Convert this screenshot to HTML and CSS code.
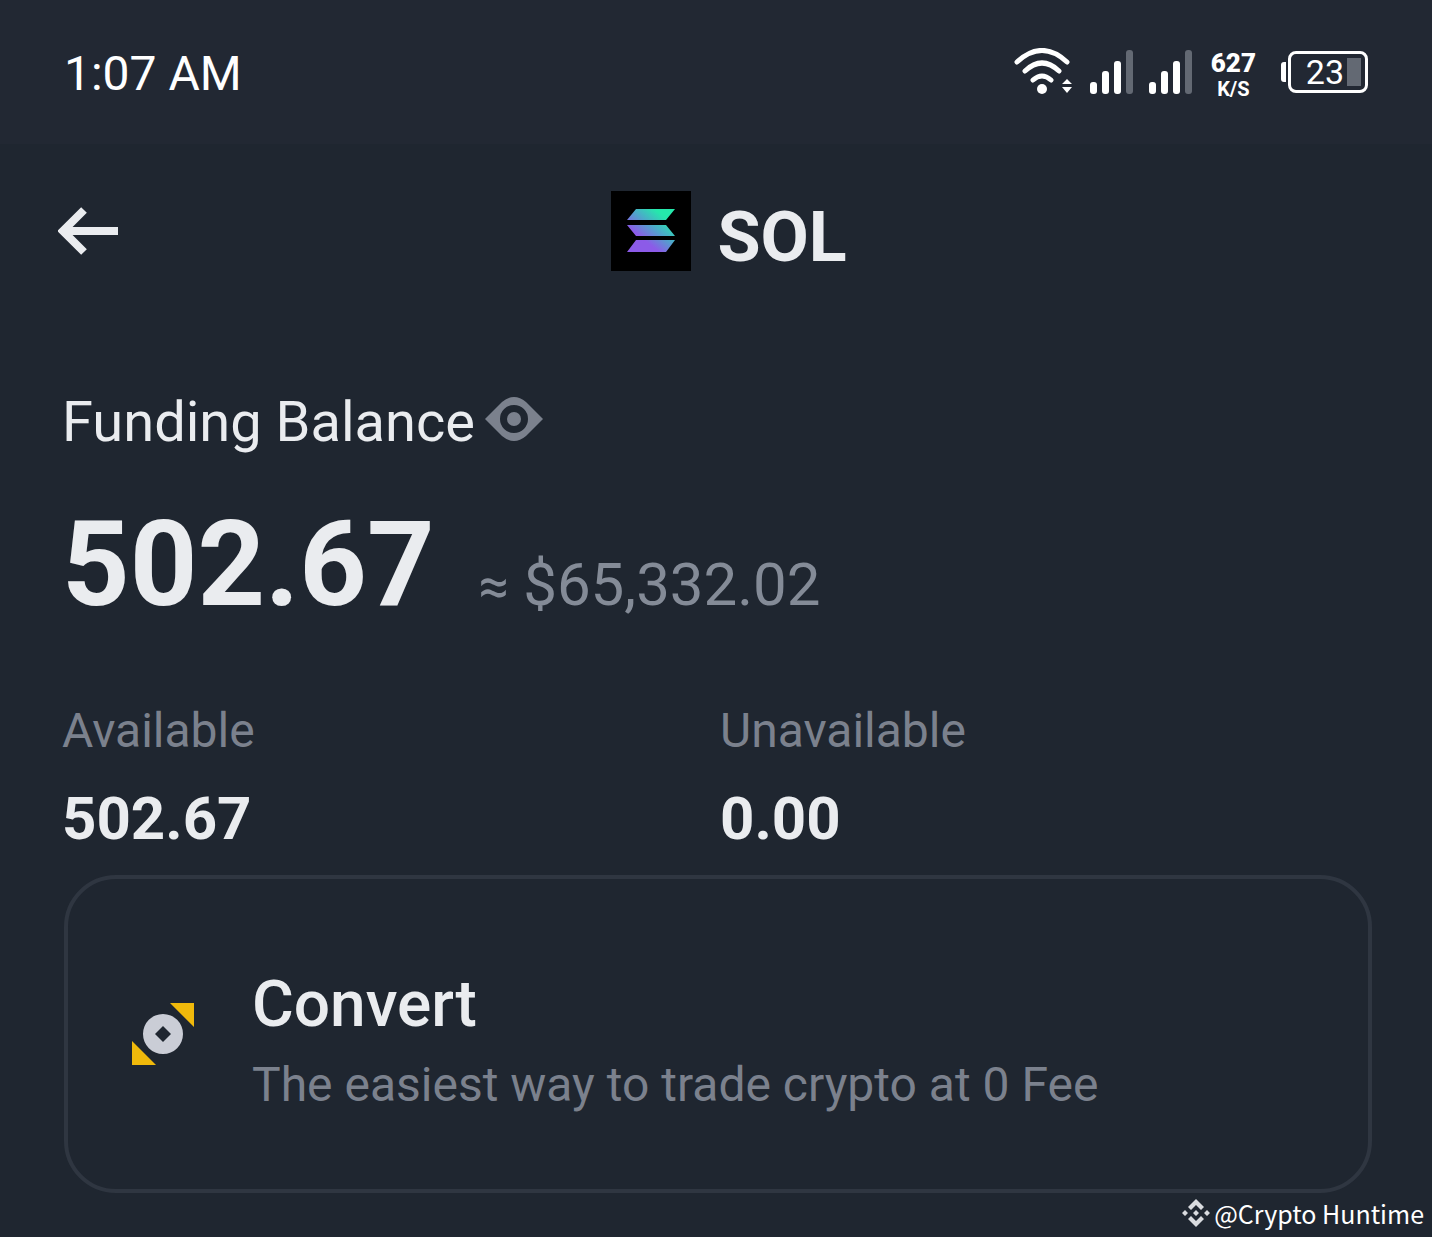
FILE: index.html
```html
<!DOCTYPE html>
<html lang="en">

<head>
    <meta charset="utf-8">
    <meta name="viewport" content="width=device-width, initial-scale=1">
    <title>SOL</title>
    <link rel="stylesheet" href="styles.css">
</head>

<body>
    <div class="status">
        <span class="time">1:07 AM</span>
        <div class="status-icons">
            <svg class="wifi" width="58" height="48" viewBox="0 0 58 48" fill="none" stroke="#fff" stroke-width="5" stroke-linecap="round">
                <path d="M3 14Q28 -9 53 14M11 23Q28 7 45 23M19 32Q28 24 37 32"/>
                <circle cx="28" cy="41" r="5" fill="#fff" stroke="none"/>
                <path d="M48 36l5-5 5 5zM48 39l5 6 5-6z" fill="#fff" stroke="none"/>
            </svg>
            <svg width="43" height="44" viewBox="0 0 43 44" fill="#fff">
                <rect x="0" y="32" width="7" height="12" rx="3"/>
                <rect x="12" y="21" width="7" height="23" rx="3"/>
                <rect x="24" y="11" width="7" height="33" rx="3"/>
                <rect x="36" y="0" width="7" height="44" rx="3" fill="#636973"/>
            </svg>
            <svg width="43" height="44" viewBox="0 0 43 44" fill="#fff">
                <rect x="0" y="32" width="7" height="12" rx="3"/>
                <rect x="12" y="21" width="7" height="23" rx="3"/>
                <rect x="24" y="11" width="7" height="33" rx="3"/>
                <rect x="36" y="0" width="7" height="44" rx="3" fill="#636973"/>
            </svg>
            <div class="speed"><b>627</b><span>K/S</span></div>
            <div class="battery"><span>23</span></div>
        </div>
    </div>

    <header class="header">
        <button class="back" aria-label="Back">
            <svg width="60" height="48" viewBox="0 0 60 48" fill="none" stroke="#eaecef" stroke-width="8">
                <path d="M26 3L5 24L26 45M8 24H60"/>
            </svg>
        </button>
        <div class="coin">
            <svg width="80" height="80" viewBox="0 0 80 80">
                <defs>
                    <linearGradient id="sol" gradientUnits="userSpaceOnUse" x1="24" y1="58" x2="56" y2="18">
                        <stop offset="0.25" stop-color="#8c5be8"/>
                        <stop offset="0.55" stop-color="#4fa5cb"/>
                        <stop offset="0.85" stop-color="#25e8ac"/>
                    </linearGradient>
                </defs>
                <rect width="80" height="80" fill="#000"/>
                <path fill="url(#sol)" d="M25 18H64L55 29H16zM16 34H55L64 45H25zM25 49H64L55 61H16z"/>
            </svg>
            <h1>SOL</h1>
        </div>
    </header>

    <main>
        <div class="label">
            <span>Funding Balance</span>
            <button class="eye" aria-label="Hide balance">
                <svg width="58" height="44" viewBox="0 0 58 44">
                    <path fill="#7b818d" fill-rule="evenodd" d="M0 22L17 5Q29 -5 41 5L58 22L41 39Q29 49 17 39zM29 8A14 14 0 1 0 29 36A14 14 0 1 0 29 8z"/>
                    <circle cx="29" cy="22" r="7" fill="#7b818d"/>
                </svg>
            </button>
        </div>
        <div class="balance">
            <span class="total">502.67</span>
            <span class="approx">≈</span>
            <span class="fiat">$65,332.02</span>
        </div>
        <dl class="split">
            <div>
                <dt>Available</dt>
                <dd>502.67</dd>
            </div>
            <div>
                <dt>Unavailable</dt>
                <dd>0.00</dd>
            </div>
        </dl>
        <a class="card" href="#">
            <svg width="62" height="62" viewBox="0 0 62 62">
                <path fill="#f0b90b" d="M38 0H62V24zM0 38V62H24z"/>
                <path fill="#cacdd6" fill-rule="evenodd" d="M31 11A20 20 0 1 0 31 51A20 20 0 1 0 31 11zM31 23L39 31L31 39L23 31z"/>
            </svg>
            <div class="card-text">
                <h2>Convert</h2>
                <p>The easiest way to trade crypto at 0 Fee</p>
            </div>
        </a>
    </main>

    <div class="watermark">
        <svg width="28" height="28" viewBox="0 0 28 28" fill="#d9dbdf">
            <path d="M14 0L22 8L19 11L14 6L9 11L6 8zM14 28L22 20L19 17L14 22L9 17L6 20zM3 11L6 14L3 17L0 14zM25 11L28 14L25 17L22 14zM14 11L17 14L14 17L11 14z"/>
        </svg>
        <span>@Crypto Huntime</span>
    </div>
</body>

</html>
```

FILE: styles.css
```css
* {
    box-sizing: border-box;
}
body {
    position: relative;
    margin: 0;
    min-height: 100vh;
    background: #1f2630;
    color: #eaecef;
    font-family: Roboto, "Noto Sans", sans-serif;
}
h1, h2, p, dl, dd {
    margin: 0;
}
button {
    padding: 0;
    border: 0;
    background: none;
    cursor: pointer;
}
svg {
    display: block;
    flex: none;
}
.status {
    display: flex;
    justify-content: space-between;
    align-items: center;
    height: 144px;
    padding: 0 64px;
    background: #222833;
    color: #fff;
}
.time {
    padding-top: 2px;
    font-size: 48px;
}
.status-icons {
    display: flex;
    align-items: center;
    gap: 16px;
}
.wifi {
    margin-right: 2px;
}
.speed {
    display: flex;
    flex-direction: column;
    align-items: center;
    margin-left: 3px;
    padding-top: 6px;
    font-size: 20px;
    line-height: 24px;
    font-weight: bold;
}
.speed b {
    font-size: 26px;
    line-height: 28px;
}
.battery {
    position: relative;
    display: flex;
    align-items: center;
    justify-content: flex-end;
    width: 80px;
    height: 42px;
    margin-left: 16px;
    padding-right: 4px;
    border: 3px solid #fff;
    border-radius: 8px;
    font-size: 34px;
}
.battery::before {
    content: "";
    position: absolute;
    left: -10px;
    width: 5px;
    height: 20px;
    border-radius: 3px 0 0 3px;
    background: #fff;
}
.battery::after {
    content: "";
    width: 14px;
    height: 28px;
    margin-left: 3px;
    background: #636973;
}
.header {
    display: grid;
    grid-template-columns: 1fr auto 1fr;
    align-items: center;
    height: 174px;
    padding: 0 32px 0 58px;
}
.coin {
    display: flex;
    align-items: center;
    gap: 26px;
}
h1 {
    padding-top: 12px;
    font-size: 70px;
    line-height: 80px;
}
main {
    padding: 68px 60px 40px 62px;
}
.label {
    display: flex;
    align-items: center;
    gap: 10px;
    font-size: 56px;
    line-height: 72px;
}
.eye {
    margin-bottom: 6px;
}
.balance {
    display: flex;
    align-items: baseline;
    margin-top: 41px;
    line-height: 132px;
    color: #848b97;
}
.total {
    margin-right: 44px;
    font-size: 118px;
    font-weight: bold;
    color: #eaecef;
}
.approx {
    margin-right: 14px;
    font-size: 54px;
}
.fiat {
    font-size: 60px;
}
.split {
    display: grid;
    grid-template-columns: 1fr 1fr;
    gap: 6px;
    margin-top: 46px;
}
dt {
    font-size: 48px;
    line-height: 64px;
    color: #7b818d;
}
dd {
    margin-top: 16px;
    font-size: 60px;
    line-height: 80px;
    font-weight: bold;
}
.card {
    display: flex;
    align-items: center;
    gap: 58px;
    min-height: 318px;
    margin: 16px 0 0 2px;
    padding: 0 64px;
    border: 4px solid #2f3641;
    border-radius: 52px;
    color: inherit;
    text-decoration: none;
}
.card-text {
    padding-top: 14px;
}
h2 {
    font-size: 64px;
    line-height: 88px;
    font-weight: 500;
}
.card p {
    font-size: 48px;
    line-height: 72px;
    color: #7b818d;
}
.watermark {
    position: absolute;
    right: 8px;
    bottom: 4px;
    display: flex;
    align-items: center;
    gap: 4px;
    font-family: "Noto Sans CJK SC", sans-serif;
    font-size: 25px;
    line-height: 40px;
    color: #fff;
}
```
